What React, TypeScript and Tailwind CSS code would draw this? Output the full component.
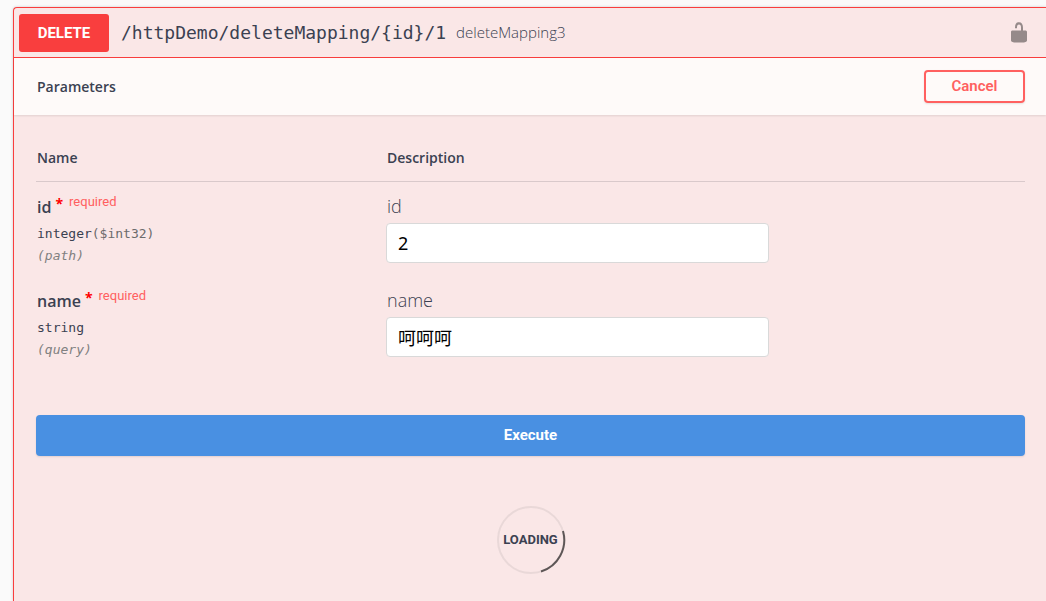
import { useState } from "react";

interface Parameter {
  name: string;
  type: string;
  format?: string;
  location: string;
  value: string;
}

const PARAMETERS: Parameter[] = [
  { name: "id", type: "integer", format: "($int32)", location: "path", value: "2" },
  { name: "name", type: "string", location: "query", value: "呵呵呵" },
];

function UnlockIcon() {
  return (
    <svg viewBox="0 0 20 20" className="h-6 w-5" preserveAspectRatio="none" fill="#000" opacity="0.4" aria-hidden="true">
      <path d="M16.8 8H14V5.6C14 2.703 12.665 1 10 1 7.334 1 6 2.703 6 5.6V6h2v-.801C8 3.754 8.797 3 10 3c1.203 0 2 .754 2 2.199V8H3c-.553 0-1 .646-1 1.199V16c0 .549.428 1.139.951 1.307l1.197.387C4.672 17.861 5.55 18 6.1 18h7.8c.549 0 1.428-.139 1.951-.307l1.196-.387c.524-.167.953-.757.953-1.306V9.199C18 8.646 17.352 8 16.8 8z" />
    </svg>
  );
}

function Summary() {
  return (
    <div className="flex h-[50px] items-center border-b border-[#f93e3e] p-[5px]">
      <span className="w-[90px] rounded-[3px] bg-[#f93e3e] py-[9px] text-center text-[15px] leading-5 font-bold text-white font-['Roboto',sans-serif]">
        DELETE
      </span>
      <a
        href="#deleteMapping3"
        className="pr-[10px] pl-3 text-lg font-medium font-['DejaVu_Sans_Mono',monospace]"
      >
        /httpDemo/deleteMapping/&#123;id&#125;/1
      </a>
      <div className="flex-1 text-[15px] font-light">deleteMapping3</div>
      <button type="button" aria-label="Authorize" className="mr-3">
        <UnlockIcon />
      </button>
    </div>
  );
}

function ParameterRow({ param }: { param: Parameter }) {
  const [value, setValue] = useState(param.value);

  return (
    <tr className="h-[94px] align-top">
      <td className="w-[350px] pt-3 pl-px">
        <div className="flex items-start">
          <span className="pt-[3px] text-base leading-5 font-semibold">{param.name}</span>
          <span className="pl-1 text-sm leading-5 font-bold text-[#ff0000]">*</span>
          <span className="pl-1.5 text-[13px] leading-4 text-[#ff6060] font-['Roboto',sans-serif]">
            required
          </span>
        </div>
        <div className="pt-1.5 text-[13px] leading-[22px] font-['DejaVu_Sans_Mono',monospace]">
          {param.type}
          {param.format && <span className="text-[#6b6b6b]">{param.format}</span>}
        </div>
        <div className="text-[13px] leading-[22px] text-[#808080] italic font-['DejaVu_Sans_Mono',monospace]">
          ({param.location})
        </div>
      </td>
      <td className="pt-[11px]">
        <label htmlFor={param.name} className="block pb-1 pl-px text-lg leading-[26px] font-light">
          {param.name}
        </label>
        <input
          id={param.name}
          type="text"
          value={value}
          onChange={(e) => setValue(e.target.value)}
          className="block h-10 w-[383px] max-w-full rounded-sm border border-[#d9d9d9] bg-white px-[11px] text-lg text-black font-['Noto_Sans','Noto_Sans_CJK_SC',sans-serif]"
        />
      </td>
    </tr>
  );
}

function Loading() {
  return (
    <div className="flex justify-center pt-[49px] pb-6">
      <div className="grid size-[70px] place-items-center">
        <svg viewBox="0 0 70 70" className="col-start-1 row-start-1 size-[70px]" fill="none" strokeWidth="2" aria-hidden="true">
          <circle cx="35" cy="35" r="33" stroke="#555" strokeOpacity="0.1" />
          <path d="M67 26A33 33 0 0 1 45 66.5" stroke="#000" strokeOpacity="0.6" />
        </svg>
        <span className="col-start-1 row-start-1 text-[13px] font-bold font-['Roboto',sans-serif]">
          LOADING
        </span>
      </div>
    </div>
  );
}

export default function App() {
  return (
    <div className="flex min-h-screen flex-col bg-[#fafafa] pt-[7px] pl-[13px] text-[#3b4151] font-['Open_Sans',sans-serif]">
      <section className="flex-1 rounded-tl border-t border-l border-[#f93e3e] bg-[#fae7e7] shadow-[0_0_3px_rgba(0,0,0,0.19)]">
        <Summary />
        <div className="flex h-[57px] items-center justify-between bg-[#fefaf9] pr-[21px] pl-[23px] shadow-[0_1px_2px_rgba(0,0,0,0.1)]">
          <h4 className="text-sm font-semibold">Parameters</h4>
          <button
            type="button"
            className="w-[101px] rounded border-2 border-[#ff6060] py-1 text-[15px] leading-[21px] font-semibold text-[#ff6060] shadow-[0_1px_2px_rgba(0,0,0,0.1)] font-['Roboto',sans-serif]"
          >
            Cancel
          </button>
        </div>

        <div className="pr-[21px] pl-[22px]">
          <table className="mt-8 w-full border-collapse">
            <thead>
              <tr className="border-b border-[#d9c9cb] text-left text-sm leading-[22px]">
                <th className="pb-3 pl-px font-semibold">Name</th>
                <th className="pb-3 pl-px font-semibold">Description</th>
              </tr>
            </thead>
            <tbody>
              {PARAMETERS.map((param) => (
                <ParameterRow key={param.name} param={param} />
              ))}
            </tbody>
          </table>

          <button
            type="button"
            className="mt-[45px] block w-full rounded bg-[#4990e2] py-2 text-[15px] leading-[25px] font-bold text-white shadow-[0_1px_2px_rgba(0,0,0,0.1)] font-['Roboto',sans-serif]"
          >
            Execute
          </button>
          <Loading />
        </div>
      </section>
    </div>
  );
}
